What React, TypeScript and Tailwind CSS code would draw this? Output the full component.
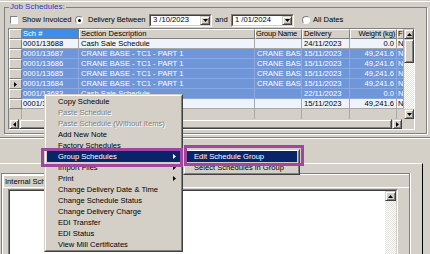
import React from 'react';

type Row = {
  sch: string;
  desc: string;
  group: string;
  date: string;
  weight: string;
  f: string;
  selected?: boolean;
  current?: boolean;
};

const rows: Row[] = [
  { sch: '0001/13688', desc: 'Cash Sale Schedule', group: '', date: '24/11/2023', weight: '0.0', f: 'N' },
  { sch: '0001/13687', desc: 'CRANE BASE - TC1 - PART 1', group: 'CRANE BASE', date: '15/11/2023', weight: '49,241.6', f: 'N', selected: true },
  { sch: '0001/13686', desc: 'CRANE BASE - TC1 - PART 1', group: 'CRANE BASE', date: '15/11/2023', weight: '49,241.6', f: 'N', selected: true },
  { sch: '0001/13685', desc: 'CRANE BASE - TC1 - PART 1', group: 'CRANE BASE', date: '15/11/2023', weight: '49,241.6', f: 'N', selected: true },
  { sch: '0001/13684', desc: 'CRANE BASE - TC1 - PART 1', group: 'CRANE BASE', date: '15/11/2023', weight: '49,241.6', f: 'N', selected: true, current: true },
  { sch: '0001/13683', desc: 'Cash Sale Schedule', group: '', date: '22/11/2023', weight: '0.0', f: 'N', selected: true },
  { sch: '0001/13682', desc: 'Cash Sale Schedule', group: '', date: '15/11/2023', weight: '49,241.6', f: 'N' },
];

const menuItems = [
  { label: 'Copy Schedule' },
  { label: 'Paste Schedule', disabled: true },
  { label: 'Paste Schedule (Without Items)', disabled: true },
  { label: 'Add New Note' },
  { label: 'Factory Schedules' },
  { label: 'Group Schedules', sub: true, active: true },
  { label: 'Import Files', sub: true },
  { label: 'Print', sub: true },
  { label: 'Change Delivery Date & Time' },
  { label: 'Change Schedule Status' },
  { label: 'Change Delivery Charge' },
  { label: 'EDI Transfer' },
  { label: 'EDI Status' },
  { label: 'View Mill Certificates' },
];

const raised =
  'bg-[#d4d0c8] border border-t-[#d4d0c8] border-l-[#d4d0c8] border-r-[#404040] border-b-[#404040] shadow-[inset_1px_1px_0_#fff,inset_-1px_-1px_0_#808080]';

const hdr =
  'flex shrink-0 items-center overflow-hidden whitespace-nowrap bg-[#d4d0c8] border border-t-white border-l-white border-r-[#808080] border-b-[#808080]';

function Arrow({ dir, color = '#000' }: { dir: 'up' | 'down' | 'left' | 'right'; color?: string }) {
  const pts = {
    up: '0,3 5,3 2.5,0',
    down: '0,0 5,0 2.5,3',
    left: '3,0 3,5 0,2.5',
    right: '0,0 0,5 3,2.5',
  }[dir];
  const w = dir === 'up' || dir === 'down' ? 5 : 3;
  const h = dir === 'up' || dir === 'down' ? 3 : 5;
  return (
    <svg width={w} height={h} viewBox={`0 0 ${w} ${h}`}>
      <polygon points={pts} fill={color} />
    </svg>
  );
}

function ScrollBtn({ dir, className }: { dir: 'up' | 'down' | 'left' | 'right'; className: string }) {
  return (
    <div className={`flex shrink-0 items-center justify-center ${raised} ${className}`}>
      <Arrow dir={dir} />
    </div>
  );
}

function Checker({ className }: { className: string }) {
  return (
    <div
      className={`bg-[repeating-conic-gradient(#ffffff_0_25%,#e4e1dc_0_50%)] bg-size-[2px_2px] ${className}`}
    />
  );
}

function DataRow({ row }: { row: Row }) {
  const line = row.selected ? 'border-[#8aa9de]' : 'border-[#a8a8a8]';
  const fill = row.selected ? 'bg-[#6f96d8] text-white' : 'bg-[#eef3fc] text-black';
  const cell = `flex shrink-0 items-center overflow-hidden whitespace-nowrap border-r border-b ${line}`;
  return (
    <div className="flex h-[10px]">
      <div className={`${hdr} w-[13px] justify-center`}>
        {row.current && <Arrow dir="right" />}
      </div>
      <div className={`flex ${fill}`}>
        <div className={`${cell} w-[57px] pl-[1px]`}>{row.sch}</div>
        <div className={`${cell} w-[176px] pl-[2px]`}>{row.desc}</div>
        <div className={`${cell} w-[47px] pl-[2px]`}>{row.group}</div>
        <div className={`${cell} w-[48px] pl-[2px]`}>{row.date}</div>
        <div className={`${cell} w-[47px] justify-end pr-[2px]`}>{row.weight}</div>
        <div className={`${cell} w-[7px] pl-[1px]`}>{row.f}</div>
      </div>
    </div>
  );
}

function Grid() {
  const empty = 'shrink-0 border-r border-[#a8a8a8]';
  return (
    <div className="w-[407px] border border-t-[#808080] border-l-[#808080] border-r-white border-b-white">
      <div className="flex h-[90px]">
        <div className="w-[395px] overflow-hidden">
          <div className="flex h-[10px]">
            <div className={`${hdr} w-[13px]`} />
            <div className="flex w-[57px] shrink-0 items-center border-r border-b border-[#808080] bg-[#3d8ee8] pl-[1px] text-white">
              Sch #
            </div>
            <div className={`${hdr} w-[176px] pl-[1px]`}>Section Description</div>
            <div className={`${hdr} w-[47px] tracking-[-0.25px]`}>Group Name</div>
            <div className={`${hdr} w-[48px] pl-[1px]`}>Delivery</div>
            <div className={`${hdr} w-[47px] justify-end pr-[1px] tracking-[-0.2px]`}>Weight (kg)</div>
            <div className={`${hdr} w-[7px]`}>F</div>
          </div>
          {rows.map((row) => (
            <DataRow key={row.sch} row={row} />
          ))}
          <div className="flex h-[10px] bg-[#d4d0c8]">
            <div className={`${empty} w-[13px] border-[#808080]`} />
            <div className={`${empty} w-[57px]`} />
            <div className={`${empty} w-[176px]`} />
            <div className={`${empty} w-[47px]`} />
            <div className={`${empty} w-[48px]`} />
            <div className={`${empty} w-[47px]`} />
          </div>
        </div>
        <div className="flex w-[10px] flex-col">
          <ScrollBtn dir="up" className="h-[10px]" />
          <div className={`h-[24px] ${raised}`} />
          <Checker className="flex-1" />
          <ScrollBtn dir="down" className="h-[10px]" />
        </div>
      </div>
      <div className="flex h-[10px]">
        <div className="flex w-[393px]">
          <ScrollBtn dir="left" className="w-[10px]" />
          <div className={`flex-1 ${raised}`} />
          <ScrollBtn dir="right" className="w-[10px]" />
        </div>
        <div className="flex-1 bg-[#d4d0c8]" />
      </div>
    </div>
  );
}

function Combo({ value }: { value: string }) {
  return (
    <div className="h-[13px] w-[63px] shrink-0 border border-t-[#808080] border-l-[#808080] border-r-white border-b-white">
      <div className="flex h-full border border-t-[#404040] border-l-[#404040] border-r-[#d4d0c8] border-b-[#d4d0c8] bg-white">
        <div className="flex flex-1 items-center whitespace-nowrap pl-[2px]">{value}</div>
        <ScrollBtn dir="down" className="w-[10px]" />
      </div>
    </div>
  );
}

function Radio({ checked }: { checked?: boolean }) {
  return (
    <div className="flex h-[8px] w-[8px] shrink-0 items-center justify-center rounded-full border border-t-[#808080] border-l-[#808080] border-r-white border-b-white bg-white">
      {checked && <div className="h-[3px] w-[3px] rounded-full bg-black" />}
    </div>
  );
}

export default function App() {
  return (
    <div className="relative h-[254px] w-[430px] overflow-hidden bg-[#d4d0c8] font-['Liberation_Sans',Arial,sans-serif] text-[7.6px] leading-none text-black">
      <div className="mt-[1px] h-[1px] bg-white" />

      <fieldset className="ml-[4px] mr-[3px] min-w-0 border border-[#808080] px-[3px] pb-[3px] shadow-[1px_1px_0_#fff]">
        <legend className="ml-[1px] h-[10px] px-[1px] text-[8px] leading-[10px] text-[#2b35c9]">Job Schedules:</legend>

        <div className="flex h-[16px] items-center whitespace-nowrap">
          <div className="ml-[2px] h-[8px] w-[8px] shrink-0 border border-t-[#808080] border-l-[#808080] border-r-white border-b-white bg-white" />
          <span className="ml-[4px] w-[52px] shrink-0">Show Invoiced</span>
          <div className="ml-[1px]">
            <Radio checked />
          </div>
          <span className="ml-[5px] w-[59px] shrink-0 tracking-[-0.1px]">Delivery Between</span>
          <div className="ml-[2px]">
            <Combo value="3 /10/2023" />
          </div>
          <span className="ml-[3px] w-[14px] shrink-0">and</span>
          <div className="ml-[2px]">
            <Combo value="1 /01/2024" />
          </div>
          <div className="ml-[8px]">
            <Radio />
          </div>
          <span className="ml-[3px]">All Dates</span>
        </div>

        <Grid />
      </fieldset>

      <div className="mt-[3px] h-[2px] border-t border-b border-t-[#808080] border-b-white" />

      <div className="mt-[24px] h-[91px] w-[423px] border-t border-r border-t-white border-r-black pt-[9px]">
        <div className="ml-[1px] h-full w-[409px] border-t border-l border-r border-[#808080] pt-[1px] shadow-[1px_0_0_#fff,inset_1px_1px_0_#fff]">
          <div className="ml-[1px] inline-flex h-[12px] items-center whitespace-nowrap border-t border-l border-r border-t-white border-l-white border-r-[#404040] pl-[1px] pr-[3px]">
            Internal Schedule Notes
          </div>
          <div className="h-[1px] bg-white" />
          <div className="ml-[6px] mt-[1px] flex h-[70px] w-[390px] border border-t-[#808080] border-l-[#808080] border-r-white border-b-white">
            <div className="flex flex-1 border border-t-[#404040] border-l-[#404040] border-r-[#d4d0c8] border-b-[#d4d0c8]">
              <div className="flex-1 bg-white" />
              <div className="flex w-[11px] flex-col">
                <ScrollBtn dir="up" className="h-[10px]" />
                <Checker className="flex-1" />
              </div>
            </div>
          </div>
        </div>
      </div>

      {/* context menu */}
      <div className="absolute left-[44px] top-[94px] w-[139px] border border-t-[#d4d0c8] border-l-[#d4d0c8] border-r-[#404040] border-b-[#404040]">
        <div className="border border-t-white border-l-white border-r-[#808080] border-b-[#808080] bg-[#d4d0c8] px-[1px]">
          {menuItems.map((item) => (
            <div
              key={item.label}
              className={`flex h-[11px] items-center justify-between whitespace-nowrap pl-[11px] pr-[4px] ${
                item.active
                  ? 'bg-[#0a246a] text-white'
                  : item.disabled
                    ? 'text-[#808080] [text-shadow:1px_1px_0_#fff]'
                    : ''
              }`}
            >
              <span>{item.label}</span>
              {item.sub && <Arrow dir="right" color={item.active ? '#fff' : '#000'} />}
            </div>
          ))}
        </div>
      </div>

      {/* submenu */}
      <div className="absolute left-[183px] top-[149px] w-[117px] border border-t-[#d4d0c8] border-l-[#d4d0c8] border-r-[#404040] border-b-[#404040]">
        <div className="border border-t-white border-l-white border-r-[#808080] border-b-[#808080] bg-[#d4d0c8] px-[1px]">
          <div className="flex h-[11px] items-center whitespace-nowrap bg-[#0a246a] pl-[8px] text-white">
            Edit Schedule Group
          </div>
          <div className="flex h-[11px] items-center whitespace-nowrap pl-[8px]">Select Schedules in Group</div>
        </div>
      </div>

      {/* highlight boxes */}
      <div className="absolute left-[41px] top-[148px] h-[19px] w-[142px] border-[3px] border-[#a046a0]" />
      <div className="absolute left-[184px] top-[145px] h-[21px] w-[120px] border-[3px] border-[#a046a0]" />
    </div>
  );
}
